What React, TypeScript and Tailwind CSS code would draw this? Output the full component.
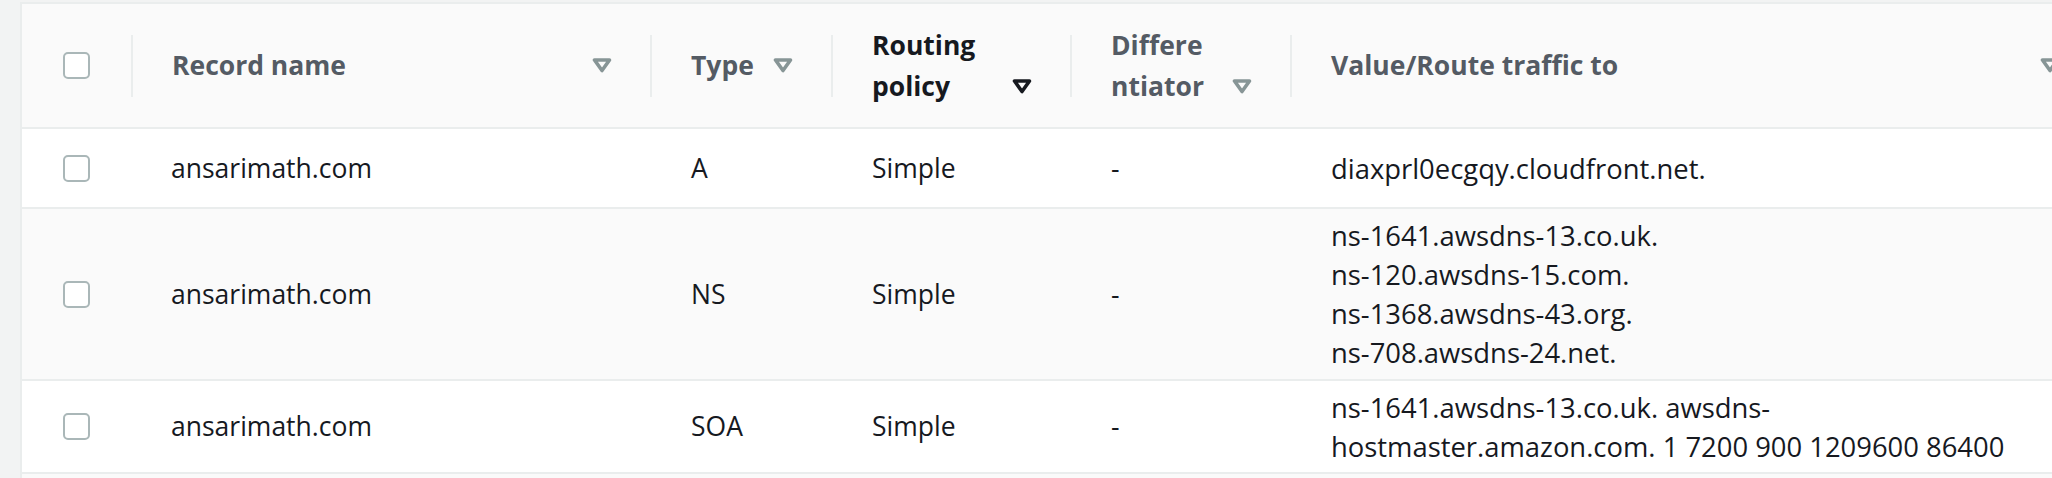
import React from "react";

interface DnsRecord {
    name: string;
    type: string;
    policy: string;
    differentiator: string;
    values: string[];
    height: string;
    striped: boolean;
}

const records: DnsRecord[] = [
    {
        name: "ansarimath.com",
        type: "A",
        policy: "Simple",
        differentiator: "-",
        values: ["diaxprl0ecgqy.cloudfront.net."],
        height: "h-[80px]",
        striped: false,
    },
    {
        name: "ansarimath.com",
        type: "NS",
        policy: "Simple",
        differentiator: "-",
        values: [
            "ns-1641.awsdns-13.co.uk.",
            "ns-120.awsdns-15.com.",
            "ns-1368.awsdns-43.org.",
            "ns-708.awsdns-24.net.",
        ],
        height: "h-[172px]",
        striped: true,
    },
    {
        name: "ansarimath.com",
        type: "SOA",
        policy: "Simple",
        differentiator: "-",
        values: [
            "ns-1641.awsdns-13.co.uk. awsdns-",
            "hostmaster.amazon.com. 1 7200 900 1209600 86400",
        ],
        height: "h-[93px]",
        striped: false,
    },
];

const cols = "grid grid-cols-[109px_519px_181px_239px_220px_808px]";

function SortIcon({ active = false }: { active?: boolean }) {
    return (
        <svg width="20" height="15" viewBox="0 0 20 15" className="shrink-0">
            <path
                d="M2.5 2 H17.5 L10 12.5 Z"
                fill="none"
                stroke={active ? "#16191f" : "#879596"}
                strokeWidth="3.6"
                strokeLinejoin="round"
            />
        </svg>
    );
}

function Checkbox() {
    return <div className="w-[27px] h-[27px] rounded-[5px] border-[2.5px] border-[#aab7b8] bg-white" />;
}

function HeaderCell({
    children,
    active = false,
}: {
    children: React.ReactNode;
    active?: boolean;
}) {
    return (
        <div className="flex items-center">
            <span className="w-[2px] h-[62px] bg-[#eaeded] shrink-0" />
            <div className="flex flex-1 items-end justify-between gap-[18px] pl-[39px] pr-[38px]">
                <span className={`leading-[41px] font-bold ${active ? "text-[#16191f]" : "text-[#545b64]"}`}>
                    {children}
                </span>
                <span className="mb-[13px]">
                    <SortIcon active={active} />
                </span>
            </div>
        </div>
    );
}

export default function App() {
    return (
        <div
            className="w-[2052px] h-[478px] overflow-hidden bg-[#f2f3f3] pt-[2px] pl-[20px] text-[26.5px] text-[#16191f]"
            style={{ fontFamily: '"Open Sans", "Noto Sans", sans-serif' }}
        >
            <div className="w-[2100px] h-full border-l-2 border-t-2 border-[#eaeded] bg-[#fafafa]">
                {/* Header */}
                <div className={`${cols} h-[125px] border-b-2 border-[#eaeded] bg-[#fafafa]`}>
                    <div className="flex items-center pl-[41px]">
                        <Checkbox />
                    </div>
                    <HeaderCell>Record name</HeaderCell>
                    <HeaderCell>Type</HeaderCell>
                    <HeaderCell active>
                        Routing
                        <br />
                        policy
                    </HeaderCell>
                    <HeaderCell>
                        Differe
                        <br />
                        ntiator
                    </HeaderCell>
                    <HeaderCell>Value/Route traffic to</HeaderCell>
                </div>

                {/* Rows */}
                {records.map((r, i) => (
                    <div
                        key={i}
                        className={`${cols} ${r.height} border-b-2 border-[#eaeded] ${r.striped ? "bg-[#fafafa]" : "bg-white"} leading-[39px]`}
                    >
                        <div className="flex items-center pl-[41px]">
                            <Checkbox />
                        </div>
                        <div className="flex items-center pl-[40px]">{r.name}</div>
                        <div className="flex items-center pl-[41px]">{r.type}</div>
                        <div className="flex items-center pl-[41px]">{r.policy}</div>
                        <div className="flex items-center pl-[41px]">{r.differentiator}</div>
                        <div className="flex flex-col justify-center pl-[41px] text-[27.4px]">
                            {r.values.map((v) => (
                                <div key={v} className="whitespace-nowrap">
                                    {v}
                                </div>
                            ))}
                        </div>
                    </div>
                ))}
            </div>
        </div>
    );
}
